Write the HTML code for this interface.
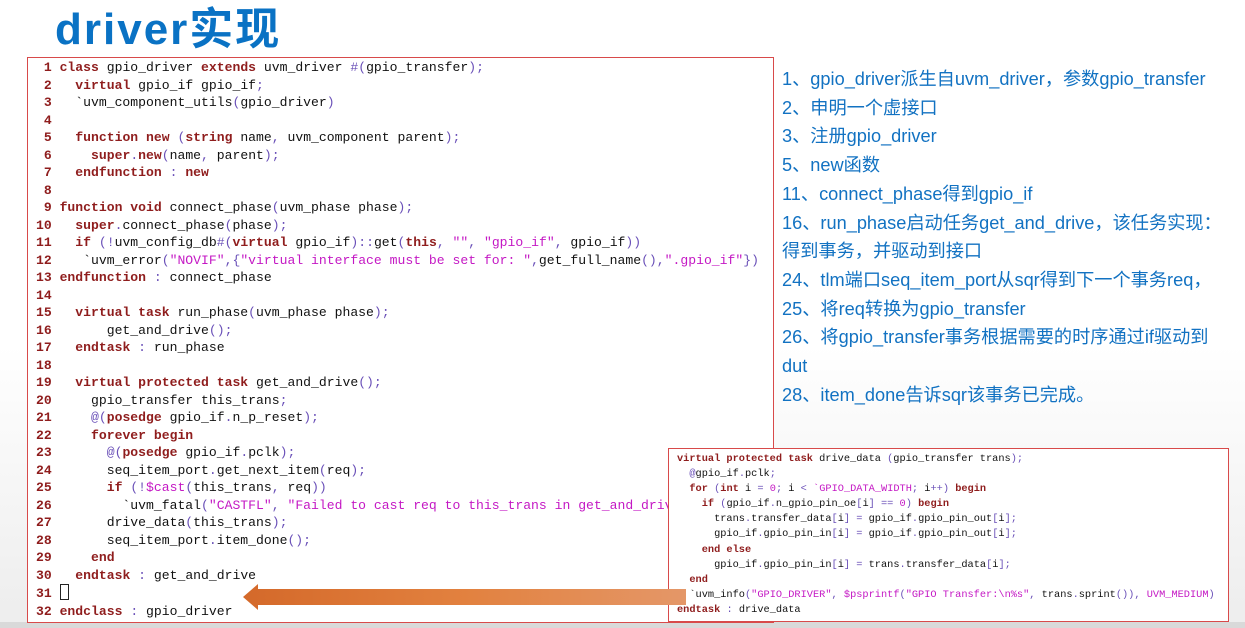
<!DOCTYPE html>
<html><head><meta charset="utf-8"><style>
body{margin:0;width:1245px;height:628px;overflow:hidden;position:relative;font-family:"Liberation Sans","Noto Sans CJK SC",sans-serif;background:linear-gradient(#fff 0%,#fff 55%,#eeeeee 97%);}
.bot{position:absolute;left:0;top:622px;width:1245px;height:6px;background:#d9d9d9}
h1{position:absolute;left:55px;top:-7px;margin:0;font-size:44px;color:#0a72c4;font-weight:bold;letter-spacing:2px;font-family:"Liberation Sans","Noto Sans CJK SC",sans-serif}
.box{position:absolute;left:27px;top:57px;width:745px;height:564px;border:1px solid #d84a4a;background:#fff}
pre{margin:0;font-family:"Liberation Mono",monospace;}
.code{position:absolute;left:8px;top:1px;font-size:13.1px;line-height:17.5px;color:#111}
.k{color:#8f1d1d;font-weight:bold}.p{color:#6a50b8}.s{color:#c418c4}.n{color:#8f1d1d;font-weight:bold}
.box2{position:absolute;left:668px;top:448px;width:559px;height:172px;border:1px solid #d84a4a;background:#fff;overflow:hidden}
.code2{position:absolute;left:8px;top:3px;font-size:10.3px;line-height:15.1px;color:#111}
.txt{position:absolute;left:782px;top:65px;font-size:18.2px;line-height:28.7px;color:#1272c2;white-space:pre}
</style></head><body>
<div class="bot"></div>
<h1>driver实现</h1>
<div class="box"><pre class="code"><span class="n"> 1</span> <span class="k">class</span> gpio_driver <span class="k">extends</span> uvm_driver <span class="p">#(</span>gpio_transfer<span class="p">);</span>
<span class="n"> 2</span>   <span class="k">virtual</span> gpio_if gpio_if<span class="p">;</span>
<span class="n"> 3</span>   `uvm_component_utils<span class="p">(</span>gpio_driver<span class="p">)</span>
<span class="n"> 4</span>
<span class="n"> 5</span>   <span class="k">function new</span> <span class="p">(</span><span class="k">string</span> name<span class="p">,</span> uvm_component parent<span class="p">);</span>
<span class="n"> 6</span>     <span class="k">super</span><span class="p">.</span><span class="k">new</span><span class="p">(</span>name<span class="p">,</span> parent<span class="p">);</span>
<span class="n"> 7</span>   <span class="k">endfunction</span> <span class="p">:</span> <span class="k">new</span>
<span class="n"> 8</span>
<span class="n"> 9</span> <span class="k">function void</span> connect_phase<span class="p">(</span>uvm_phase phase<span class="p">);</span>
<span class="n">10</span>   <span class="k">super</span><span class="p">.</span>connect_phase<span class="p">(</span>phase<span class="p">);</span>
<span class="n">11</span>   <span class="k">if</span> <span class="p">(!</span>uvm_config_db<span class="p">#(</span><span class="k">virtual</span> gpio_if<span class="p">)::</span>get<span class="p">(</span><span class="k">this</span><span class="p">,</span> <span class="s">""</span><span class="p">,</span> <span class="s">"gpio_if"</span><span class="p">,</span> gpio_if<span class="p">))</span>
<span class="n">12</span>    `uvm_error<span class="p">(</span><span class="s">"NOVIF"</span><span class="p">,{</span><span class="s">"virtual interface must be set for: "</span><span class="p">,</span>get_full_name<span class="p">(),</span><span class="s">".gpio_if"</span><span class="p">})</span>
<span class="n">13</span> <span class="k">endfunction</span> <span class="p">:</span> connect_phase
<span class="n">14</span>
<span class="n">15</span>   <span class="k">virtual task</span> run_phase<span class="p">(</span>uvm_phase phase<span class="p">);</span>
<span class="n">16</span>       get_and_drive<span class="p">();</span>
<span class="n">17</span>   <span class="k">endtask</span> <span class="p">:</span> run_phase
<span class="n">18</span>
<span class="n">19</span>   <span class="k">virtual protected task</span> get_and_drive<span class="p">();</span>
<span class="n">20</span>     gpio_transfer this_trans<span class="p">;</span>
<span class="n">21</span>     <span class="p">@(</span><span class="k">posedge</span> gpio_if<span class="p">.</span>n_p_reset<span class="p">);</span>
<span class="n">22</span>     <span class="k">forever begin</span>
<span class="n">23</span>       <span class="p">@(</span><span class="k">posedge</span> gpio_if<span class="p">.</span>pclk<span class="p">);</span>
<span class="n">24</span>       seq_item_port<span class="p">.</span>get_next_item<span class="p">(</span>req<span class="p">);</span>
<span class="n">25</span>       <span class="k">if</span> <span class="p">(!</span><span class="s">$cast</span><span class="p">(</span>this_trans<span class="p">,</span> req<span class="p">))</span>
<span class="n">26</span>         `uvm_fatal<span class="p">(</span><span class="s">"CASTFL"</span><span class="p">,</span> <span class="s">"Failed to cast req to this_trans in get_and_drive"</span>
<span class="n">27</span>       drive_data<span class="p">(</span>this_trans<span class="p">);</span>
<span class="n">28</span>       seq_item_port<span class="p">.</span>item_done<span class="p">();</span>
<span class="n">29</span>     <span class="k">end</span>
<span class="n">30</span>   <span class="k">endtask</span> <span class="p">:</span> get_and_drive
<span class="n">31</span> <span style="display:inline-block;width:7px;height:14px;border:1px solid #222;vertical-align:-3px"></span>
<span class="n">32</span> <span class="k">endclass</span> <span class="p">:</span> gpio_driver</pre></div>
<div class="box2"><pre class="code2"><span class="k">virtual protected task</span> drive_data <span class="p">(</span>gpio_transfer trans<span class="p">);</span>
  <span class="p">@</span>gpio_if<span class="p">.</span>pclk<span class="p">;</span>
  <span class="k">for</span> <span class="p">(</span><span class="k">int</span> i <span class="p">=</span> <span class="s">0</span><span class="p">;</span> i <span class="p">&lt;</span> <span class="s">`GPIO_DATA_WIDTH</span><span class="p">;</span> i<span class="p">++)</span> <span class="k">begin</span>
    <span class="k">if</span> <span class="p">(</span>gpio_if<span class="p">.</span>n_gpio_pin_oe<span class="p">[</span>i<span class="p">]</span> <span class="p">==</span> <span class="s">0</span><span class="p">)</span> <span class="k">begin</span>
      trans<span class="p">.</span>transfer_data<span class="p">[</span>i<span class="p">]</span> <span class="p">=</span> gpio_if<span class="p">.</span>gpio_pin_out<span class="p">[</span>i<span class="p">];</span>
      gpio_if<span class="p">.</span>gpio_pin_in<span class="p">[</span>i<span class="p">]</span> <span class="p">=</span> gpio_if<span class="p">.</span>gpio_pin_out<span class="p">[</span>i<span class="p">];</span>
    <span class="k">end else</span>
      gpio_if<span class="p">.</span>gpio_pin_in<span class="p">[</span>i<span class="p">]</span> <span class="p">=</span> trans<span class="p">.</span>transfer_data<span class="p">[</span>i<span class="p">];</span>
  <span class="k">end</span>
  `uvm_info<span class="p">(</span><span class="s">"GPIO_DRIVER"</span><span class="p">,</span> <span class="s">$psprintf</span><span class="p">(</span><span class="s">"GPIO Transfer:\n%s"</span><span class="p">,</span> trans<span class="p">.</span>sprint<span class="p">()),</span> <span class="s">UVM_MEDIUM</span><span class="p">)</span>
<span class="k">endtask</span> <span class="p">:</span> drive_data</pre></div>
<svg style="position:absolute;left:0;top:0" width="1245" height="628">
<defs><linearGradient id="g" x1="0" x2="1"><stop offset="0" stop-color="#d4692a"/><stop offset="0.5" stop-color="#e2813f"/><stop offset="1" stop-color="#e49768"/></linearGradient></defs>
<polygon points="243,597 258,584 258,589 686,589 686,605 258,605 258,610" fill="url(#g)"/>
</svg>
<div class="txt">1、gpio_driver派生自uvm_driver，参数gpio_transfer
2、申明一个虚接口
3、注册gpio_driver
5、new函数
11、connect_phase得到gpio_if
16、run_phase启动任务get_and_drive，该任务实现：
得到事务，并驱动到接口
24、tlm端口seq_item_port从sqr得到下一个事务req，
25、将req转换为gpio_transfer
26、将gpio_transfer事务根据需要的时序通过if驱动到
dut
28、item_done告诉sqr该事务已完成。</div>
</body></html>
